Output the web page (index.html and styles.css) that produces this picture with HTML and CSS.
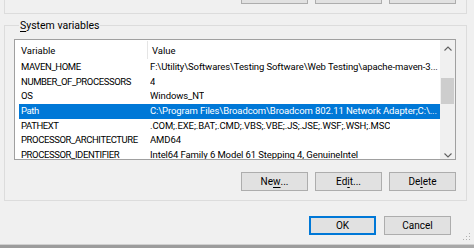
FILE: index.html
```html
<!DOCTYPE html>
<html>
<head>
<meta charset="utf-8">
<link rel="stylesheet" href="styles.css">
</head>
<body>
<div class="dialog">
  <div class="user-group">
    <div class="btn-row clipped">
      <div class="btn"></div>
      <div class="btn"></div>
      <div class="btn"></div>
    </div>
  </div>
  <fieldset class="sys-group">
    <legend><u>S</u>ystem variables</legend>
    <div class="listbox">
      <div class="list-main">
        <div class="list-head">
          <div class="col-var">Variable</div>
          <div class="col-sep"></div>
          <div class="col-val">Value</div>
        </div>
        <div class="rows">
          <div class="row"><span class="c1">MAVEN_HOME</span><span class="c2">F:\Utility\Softwares\Testing Software\Web Testing\apache-maven-3...</span></div>
          <div class="row"><span class="c1">NUMBER_OF_PROCESSORS</span><span class="c2">4</span></div>
          <div class="row"><span class="c1">OS</span><span class="c2">Windows_NT</span></div>
          <div class="row selected"><span class="c1">Path</span><span class="c2">C:\Program Files\Broadcom\Broadcom 802.11 Network Adapter;C:\...</span></div>
          <div class="row"><span class="c1">PATHEXT</span><span class="c2">.COM;.EXE;.BAT;.CMD;.VBS;.VBE;.JS;.JSE;.WSF;.WSH;.MSC</span></div>
          <div class="row"><span class="c1">PROCESSOR_ARCHITECTURE</span><span class="c2">AMD64</span></div>
          <div class="row"><span class="c1">PROCESSOR_IDENTIFIER</span><span class="c2">Intel64 Family 6 Model 61 Stepping 4, GenuineIntel</span></div>
        </div>
      </div>
      <div class="vscroll">
        <div class="arrow up">
          <svg width="8" height="5" viewBox="0 0 8 5"><path d="M0.5 4.5 L4 1 L7.5 4.5" fill="none" stroke="#606060" stroke-width="1.1"/></svg>
        </div>
        <div class="track">
          <div class="track-top"></div>
          <div class="thumb"></div>
        </div>
        <div class="arrow down">
          <svg width="8" height="5" viewBox="0 0 8 5"><path d="M0.5 0.5 L4 4 L7.5 0.5" fill="none" stroke="#606060" stroke-width="1.1"/></svg>
        </div>
      </div>
    </div>
    <div class="btn-row sys-btns">
      <div class="btn">Ne<u>w</u>...</div>
      <div class="btn">Ed<u>i</u>t...</div>
      <div class="btn">De<u>l</u>ete</div>
    </div>
  </fieldset>
  <div class="btn-row dlg-btns">
    <div class="btn default">OK</div>
    <div class="btn">Cancel</div>
  </div>
  <div class="frame-bottom">
    <div class="fb-left"></div>
    <div class="fb-right"></div>
  </div>
  <svg class="grip" width="8" height="8" viewBox="0 0 8 8">
    <rect x="6" y="0" width="1" height="1" fill="#b0b0b0"/>
    <rect x="3" y="3" width="1" height="1" fill="#b0b0b0"/>
    <rect x="6" y="3" width="1" height="1" fill="#b0b0b0"/>
    <rect x="0" y="6" width="1" height="1" fill="#b0b0b0"/>
    <rect x="3" y="6" width="1" height="1" fill="#b0b0b0"/>
    <rect x="6" y="6" width="1" height="1" fill="#b0b0b0"/>
  </svg>
</div>
</body>
</html>
```

FILE: styles.css
```css
html, body {
  margin: 0;
  padding: 0;
}
body {
  width: 474px;
  height: 248px;
  overflow: hidden;
  background: #f0f0f0;
  font-family: Roboto, "Noto Sans", sans-serif;
  font-size: 10.5px;
  color: #000;
}
.dialog {
  position: relative;
  width: 474px;
  height: 248px;
}
.user-group {
  margin: 0 7px 0 4px;
  border: 1px solid #dcdcdc;
  border-top: none;
  box-sizing: border-box;
  height: 14px;
}
.btn-row {
  display: flex;
  justify-content: flex-end;
  gap: 7px;
}
.clipped {
  height: 4px;
  overflow: hidden;
  align-items: flex-end;
  padding-right: 10px;
}
.btn {
  width: 67px;
  height: 19px;
  box-sizing: border-box;
  border: 1px solid #adadad;
  background: #e1e1e1;
  display: flex;
  align-items: center;
  justify-content: center;
  flex: none;
  line-height: 1;
  font-size: 10px;
}
.btn.default {
  border: 2px solid #0078d7;
}
.btn u {
  text-decoration-thickness: 1px;
  text-underline-offset: 2px;
}
.sys-group {
  margin: 5px 7px 0 4px;
  padding: 7px 10px 9px 9px;
  border: 1px solid #dcdcdc;
  min-width: 0;
}
.sys-group legend {
  margin-left: 5px;
  padding: 0 1px;
  line-height: 13px;
}
.sys-group legend u {
  text-decoration-thickness: 1px;
  text-underline-offset: 2px;
}
.listbox {
  height: 121px;
  border: 1px solid #a0a0a0;
  background: #fff;
  box-sizing: border-box;
  display: flex;
  overflow: hidden;
  font-size: 9.5px;
}
.list-main {
  flex: 1;
  min-width: 0;
}
.list-head {
  height: 20px;
  display: flex;
  align-items: center;
}
.col-var {
  width: 126px;
  padding-left: 6px;
}
.col-sep {
  width: 1px;
  height: 18px;
  background: #e5e5e5;
}
.col-val {
  padding-left: 4px;
}
.rows {
  padding-left: 4px;
}
.row {
  height: 14.67px;
  line-height: 14.67px;
  display: flex;
  white-space: nowrap;
}
.row .c1 {
  width: 129px;
  padding-left: 2px;
  flex: none;
  letter-spacing: -0.4px;
}
.row .c2 {
  overflow: hidden;
  letter-spacing: -0.1px;
}
.row.selected {
  background: #0078d7;
  color: #fff;
}
.vscroll {
  width: 15px;
  flex: none;
  background: #f0f0f0;
  display: flex;
  flex-direction: column;
}
.arrow {
  height: 17px;
  display: flex;
  justify-content: center;
}
.arrow.up {
  align-items: center;
}
.arrow.down {
  align-items: flex-end;
  padding-bottom: 1px;
}
.track {
  flex: 1;
  display: flex;
  flex-direction: column;
}
.track-top {
  height: 21px;
}
.thumb {
  height: 26px;
  margin: 0 1px;
  background: #cdcdcd;
}
.sys-btns {
  margin-top: 12px;
  padding-right: 0;
}
.dlg-btns {
  margin-top: 15px;
  padding-right: 23px;
  gap: 8px;
}
.frame-bottom {
  margin-top: 9px;
  height: 5px;
  border-top: 1px solid #d0d0d0;
  display: flex;
}
.fb-left {
  flex: 1;
  background: #9c9c9c;
}
.fb-right {
  width: 74px;
  background: #a8a8a8;
}
.grip {
  position: absolute;
  right: 3px;
  bottom: 7px;
}
```
